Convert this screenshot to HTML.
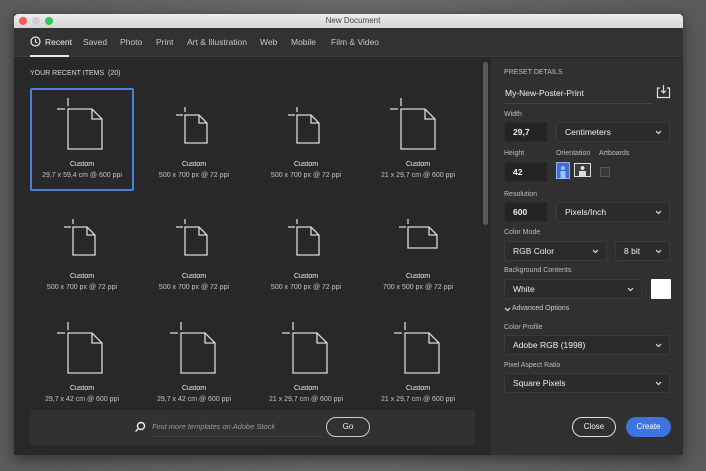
<!DOCTYPE html>
<html><head><meta charset="utf-8"><style>
*{margin:0;padding:0;box-sizing:border-box}
body{width:706px;height:471px;overflow:hidden;background:linear-gradient(90deg,#5c5c5c,#6a6a6a 50%,#5a5a5a);font-family:"Liberation Sans",sans-serif;position:relative;color:#ddd}
.a{position:absolute}
.t{font-size:8px;white-space:nowrap}
.lbl{font-size:7px;color:#bdbdbd;position:absolute;white-space:nowrap}
.fld{position:absolute;background:#232323;border:1px solid #2c2c2c;border-radius:2px;font-size:8.5px;color:#eee;padding-left:8px;line-height:18px;font-weight:bold}
.dd{position:absolute;background:#2b2b2b;border:1px solid #3a3a3a;border-radius:2px;font-size:8.5px;color:#eee;padding-left:8px;line-height:18px}
.dd svg{position:absolute;right:7px;top:7px}
.cap{position:absolute;width:112px;text-align:center;font-size:7px;color:#eee;white-space:nowrap}
.cap b{display:block;font-weight:normal;margin-bottom:4px}
.cap span{color:#c4c4c4}
.tab{position:absolute;top:37px;color:#c8c8c8;font-size:8.5px;white-space:nowrap}
</style></head><body>
<div class="a" style="left:14px;top:14px;width:669px;height:441px;background:#282828;box-shadow:0 4px 14px rgba(0,0,0,.5)"></div>
<div class="a" style="left:14px;top:14px;width:669px;height:14px;background:linear-gradient(#ececec,#d6d6d6);border-radius:4px 4px 0 0"></div>
<div class="a" style="left:19px;top:17px;width:8px;height:8px;border-radius:50%;background:#fc5753"></div>
<div class="a" style="left:32px;top:17px;width:8px;height:8px;border-radius:50%;background:#cfcfcf"></div>
<div class="a" style="left:45px;top:17px;width:8px;height:8px;border-radius:50%;background:#34c84a"></div>
<div class="a t" style="left:0;width:706px;top:16px;text-align:center;color:#444;font-size:8px">New Document</div>
<div class="a" style="left:14px;top:28px;width:669px;height:29px;background:#323232;border-bottom:1px solid #3c3c3c"></div>
<svg class="a" style="left:30px;top:36px" width="11" height="11" viewBox="0 0 11 11"><circle cx="5.5" cy="5.5" r="4.5" fill="none" stroke="#eee" stroke-width="1.2"/><path d="M5.5 3V5.8L7.3 7" fill="none" stroke="#eee" stroke-width="1.1"/></svg>
<div class="tab" style="left:45px;color:#f2f2f2">Recent</div>
<div class="a" style="left:30px;top:55px;width:39px;height:2px;background:#e8e8e8"></div>
<div class="tab" style="left:83px">Saved</div>
<div class="tab" style="left:120px">Photo</div>
<div class="tab" style="left:156px">Print</div>
<div class="tab" style="left:187px">Art &amp; Illustration</div>
<div class="tab" style="left:260px">Web</div>
<div class="tab" style="left:291px">Mobile</div>
<div class="tab" style="left:331px">Film &amp; Video</div>
<div class="a t" style="left:30px;top:70px;color:#d8d8d8;font-size:7px">YOUR RECENT ITEMS &nbsp;(20)</div>
<div class="a" style="left:483px;top:62px;width:5px;height:163px;border-radius:3px;background:#5a5a5a"></div>
<div class="a" style="left:30px;top:88px;width:104px;height:103px;border:2px solid #4a7fdc;border-radius:2px"></div>
<svg class="a" style="left:0;top:0" width="490" height="410" fill="none" stroke="#d9d9d9" stroke-width="1.3">
<path d="M57 109H65M68 98V106M68 109H92L102 119V149H68Z M92 109V119H102"/>
<path d="M176 115H183M185 107V112M185 115H199L207 123V143H185Z M199 115V123H207"/>
<path d="M288 115H295M297 107V112M297 115H311L319 123V143H297Z M311 115V123H319"/>
<path d="M390 109H398M401 98V106M401 109H425L435 119V149H401Z M425 109V119H435"/>
<path d="M64 227H71M73 219V224M73 227H87L95 235V255H73Z M87 227V235H95"/>
<path d="M176 227H183M185 219V224M185 227H199L207 235V255H185Z M199 227V235H207"/>
<path d="M288 227H295M297 219V224M297 227H311L319 235V255H297Z M311 227V235H319"/>
<path d="M399 227H406M408 219V224M408 227H429L437 235V248H408Z M429 227V235H437"/>
<path d="M57 333H65M68 322V330M68 333H92L102 343V373H68Z M92 333V343H102"/>
<path d="M170 333H178M181 322V330M181 333H205L215 343V373H181Z M205 333V343H215"/>
<path d="M282 333H290M293 322V330M293 333H317L327 343V373H293Z M317 333V343H327"/>
<path d="M394 333H402M405 322V330M405 333H429L439 343V373H405Z M429 333V343H439"/>
</svg>
<div class="cap" style="left:26px;top:161px"><b>Custom</b><span>29,7 x 59,4 cm @ 600 ppi</span></div>
<div class="cap" style="left:138px;top:161px"><b>Custom</b><span>500 x 700 px @ 72 ppi</span></div>
<div class="cap" style="left:250px;top:161px"><b>Custom</b><span>500 x 700 px @ 72 ppi</span></div>
<div class="cap" style="left:362px;top:161px"><b>Custom</b><span>21 x 29,7 cm @ 600 ppi</span></div>
<div class="cap" style="left:26px;top:273px"><b>Custom</b><span>500 x 700 px @ 72 ppi</span></div>
<div class="cap" style="left:138px;top:273px"><b>Custom</b><span>500 x 700 px @ 72 ppi</span></div>
<div class="cap" style="left:250px;top:273px"><b>Custom</b><span>500 x 700 px @ 72 ppi</span></div>
<div class="cap" style="left:362px;top:273px"><b>Custom</b><span>700 x 500 px @ 72 ppi</span></div>
<div class="cap" style="left:26px;top:385px"><b>Custom</b><span>29,7 x 42 cm @ 600 ppi</span></div>
<div class="cap" style="left:138px;top:385px"><b>Custom</b><span>29,7 x 42 cm @ 600 ppi</span></div>
<div class="cap" style="left:250px;top:385px"><b>Custom</b><span>21 x 29,7 cm @ 600 ppi</span></div>
<div class="cap" style="left:362px;top:385px"><b>Custom</b><span>21 x 29,7 cm @ 600 ppi</span></div>
<div class="a" style="left:30px;top:410px;width:445px;height:35px;background:#313131"></div>
<svg class="a" style="left:134px;top:421px" width="12" height="12" viewBox="0 0 12 12" fill="none" stroke="#eee" stroke-width="1.4"><circle cx="7" cy="5" r="3.5"/><path d="M4.5 7.5L1.5 10.5"/></svg>
<div class="a t" style="left:152px;top:422px;color:#9a9a9a;font-style:italic;font-size:7.5px">Find more templates on Adobe Stock</div>
<div class="a" style="left:151px;top:436px;width:170px;height:1px;background:#3e3e3e"></div>
<div class="a t" style="left:326px;top:417px;width:44px;height:20px;border:1.5px solid #ccc;border-radius:10px;text-align:center;line-height:17px;color:#eee">Go</div>
<div class="a" style="left:491px;top:58px;width:192px;height:397px;background:#303030"></div>
<div class="lbl" style="left:504px;top:69px">PRESET DETAILS</div>
<div class="a t" style="left:505px;top:88px;color:#eee;font-size:8.5px">My-New-Poster-Print</div>
<div class="a" style="left:504px;top:103px;width:148px;height:1px;background:#444"></div>
<svg class="a" style="left:656px;top:84px" width="15" height="15" viewBox="0 0 15 15" fill="none" stroke="#ddd" stroke-width="1.2"><path d="M4 4H1.5V13.5H13.5V4H11M7.5 1V9M5 6.5L7.5 9L10 6.5"/></svg>
<div class="lbl" style="left:504px;top:111px">Width</div>
<div class="fld" style="left:504px;top:122px;width:44px;height:20px">29,7</div>
<div class="dd" style="left:556px;top:122px;width:114px;height:20px">Centimeters<svg width="7" height="5"><path d="M1 1L3.5 3.5L6 1" stroke="#ddd" fill="none" stroke-width="1.2"/></svg></div>
<div class="lbl" style="left:504px;top:150px">Height</div>
<div class="lbl" style="left:556px;top:150px">Orientation</div>
<div class="lbl" style="left:599px;top:150px">Artboards</div>
<div class="fld" style="left:504px;top:162px;width:44px;height:20px">42</div>
<div class="a" style="left:556px;top:162px;width:14px;height:17px;background:#3b6fd6;border:1px solid #8fb0f0"></div>
<svg class="a" style="left:556px;top:162px" width="14" height="17"><circle cx="7" cy="6" r="2" fill="#9ec0ff"/><rect x="4.5" y="9" width="5" height="8" fill="#9ec0ff"/></svg>
<div class="a" style="left:574px;top:163px;width:17px;height:14px;background:#3a3a3a;border:1.3px solid #ddd"></div>
<svg class="a" style="left:574px;top:163px" width="17" height="14"><circle cx="8.5" cy="5" r="2" fill="#ddd"/><rect x="5" y="8" width="7" height="5" fill="#ddd"/></svg>
<div class="a" style="left:600px;top:167px;width:10px;height:10px;border:1px solid #555;background:#3a3a3a"></div>
<div class="lbl" style="left:504px;top:191px">Resolution</div>
<div class="fld" style="left:504px;top:202px;width:44px;height:20px">600</div>
<div class="dd" style="left:556px;top:202px;width:114px;height:20px">Pixels/Inch<svg width="7" height="5"><path d="M1 1L3.5 3.5L6 1" stroke="#ddd" fill="none" stroke-width="1.2"/></svg></div>
<div class="lbl" style="left:504px;top:229px">Color Mode</div>
<div class="dd" style="left:504px;top:241px;width:103px;height:20px">RGB Color<svg width="7" height="5"><path d="M1 1L3.5 3.5L6 1" stroke="#ddd" fill="none" stroke-width="1.2"/></svg></div>
<div class="dd" style="left:615px;top:241px;width:55px;height:20px">8 bit<svg width="7" height="5"><path d="M1 1L3.5 3.5L6 1" stroke="#ddd" fill="none" stroke-width="1.2"/></svg></div>
<div class="lbl" style="left:504px;top:267px">Background Contents</div>
<div class="dd" style="left:504px;top:279px;width:138px;height:20px">White<svg width="7" height="5"><path d="M1 1L3.5 3.5L6 1" stroke="#ddd" fill="none" stroke-width="1.2"/></svg></div>
<div class="a" style="left:651px;top:279px;width:20px;height:20px;background:#fff;border-radius:1px"></div>
<svg class="a" style="left:504px;top:307px" width="7" height="5"><path d="M1 1L3.5 3.5L6 1" stroke="#ddd" fill="none" stroke-width="1.2"/></svg>
<div class="lbl" style="left:512px;top:305px;color:#ccc">Advanced Options</div>
<div class="lbl" style="left:504px;top:324px">Color Profile</div>
<div class="dd" style="left:504px;top:335px;width:166px;height:20px">Adobe RGB (1998)<svg width="7" height="5"><path d="M1 1L3.5 3.5L6 1" stroke="#ddd" fill="none" stroke-width="1.2"/></svg></div>
<div class="lbl" style="left:504px;top:362px">Pixel Aspect Ratio</div>
<div class="dd" style="left:504px;top:373px;width:166px;height:20px">Square Pixels<svg width="7" height="5"><path d="M1 1L3.5 3.5L6 1" stroke="#ddd" fill="none" stroke-width="1.2"/></svg></div>
<div class="a t" style="left:572px;top:417px;width:44px;height:20px;border:1.5px solid #ddd;border-radius:10px;text-align:center;line-height:17px;color:#eee">Close</div>
<div class="a t" style="left:626px;top:417px;width:45px;height:20px;background:#3d74e0;border-radius:10px;text-align:center;line-height:20px;color:#fff">Create</div>
</body></html>
